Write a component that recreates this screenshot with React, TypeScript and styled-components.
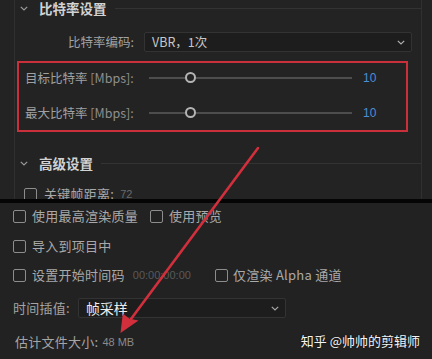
import React from 'react';
import styled, { createGlobalStyle } from 'styled-components';

const GlobalStyle = createGlobalStyle`
  html, body {
    margin: 0;
    padding: 0;
    background: #232323;
  }
  body {
    font-family: "Noto Sans CJK SC", "Noto Sans", sans-serif;
    -webkit-font-smoothing: antialiased;
  }
`;

const Page = styled.div`
  position: relative;
  width: 432px;
  height: 359px;
  overflow: hidden;
  display: flex;
  flex-direction: column;
`;

/* ---------- top screenshot ---------- */

const TopPanel = styled.div`
  height: 199px;
  background: #232323;
  overflow: hidden;
  flex-shrink: 0;
`;

const Frame = styled.div`
  margin-left: 14px;
  width: 406px;
  height: 100%;
  border-left: 1px solid #303030;
  border-right: 1px solid #303030;
  display: flex;
  flex-direction: column;
`;

const SectionHeader = styled.div<{ $top: number }>`
  display: flex;
  align-items: center;
  height: 16px;
  margin-top: ${p => p.$top}px;
  padding-left: 5px;
`;

const HeaderTitle = styled.span`
  margin-left: 11px;
  font-size: 13.5px;
  font-weight: 700;
  line-height: 16px;
  color: #d2d2d2;
  white-space: nowrap;
`;

const HeaderRule = styled.div`
  flex: 1;
  height: 1px;
  margin-left: 8px;
  margin-top: 1px;
  background: #333;
`;

const FieldRow = styled.div`
  display: flex;
  align-items: center;
  margin-top: 16px;
`;

const FieldLabel = styled.span<{ $width: number }>`
  width: ${p => p.$width}px;
  text-align: right;
  font-size: 12.5px;
  line-height: 20px;
  color: #a2a2a2;
  white-space: nowrap;
`;

const Select = styled.div<{ $width: number; $left: number }>`
  box-sizing: border-box;
  width: ${p => p.$width}px;
  height: 20px;
  margin-left: ${p => p.$left}px;
  display: flex;
  align-items: center;
  justify-content: space-between;
  padding: 0 6px 0 7px;
  background: #1d1d1d;
  border: 1px solid #333;
  border-radius: 2px;
`;

const SelectText = styled.span<{ $bright?: boolean }>`
  font-size: ${p => (p.$bright ? 14 : 12.5)}px;
  line-height: 18px;
  color: ${p => (p.$bright ? '#ececec' : '#c6c6c6')};
  white-space: nowrap;
`;

const Highlight = styled.div`
  margin: 9px 13px 0 2px;
  border: 2px solid #c9303c;
  padding-bottom: 2px;
  display: flex;
  flex-direction: column;
  gap: 5px;
`;

const SliderRow = styled.div`
  display: flex;
  align-items: center;
  height: 30px;
  padding-left: 6px;
`;

const SliderLabel = styled.span`
  width: 124px;
  font-size: 12.5px;
  line-height: 20px;
  color: #a0a0a0;
  white-space: nowrap;
`;

const Unit = styled.span`
  color: #8e8e8e;
`;

const Track = styled.div`
  position: relative;
  width: 203px;
  height: 2px;
  background: #4d4d4d;
`;

const Thumb = styled.div`
  position: absolute;
  top: -5px;
  box-sizing: border-box;
  width: 11px;
  height: 11px;
  border-radius: 50%;
  border: 2px solid #b4b4b4;
  background: #232323;
`;

const Value = styled.span`
  margin-left: 11px;
  font-family: "Liberation Sans", Arial, sans-serif;
  font-size: 12px;
  line-height: 20px;
  color: #4a8fd6;
`;

const Separator = styled.div`
  height: 1px;
  margin-top: 16px;
  background: #333;
`;

const CheckRow = styled.div<{ $top: number; $left?: number }>`
  display: flex;
  align-items: center;
  height: 26px;
  margin-top: ${p => p.$top}px;
  padding-left: ${p => p.$left ?? 0}px;
`;

const Box = styled.div`
  box-sizing: border-box;
  width: 13px;
  height: 13px;
  border: 1.5px solid #8d8d8d;
  border-radius: 2px;
  flex-shrink: 0;
`;

const CheckText = styled.span<{ $gap?: number }>`
  margin-left: ${p => p.$gap ?? 6}px;
  font-size: 13px;
  letter-spacing: 0.25px;
  line-height: 20px;
  color: #a9a9a9;
  white-space: nowrap;
`;

const DimText = styled.span<{ $left: number; $color?: string }>`
  margin-left: ${p => p.$left}px;
  font-family: "Liberation Sans", Arial, sans-serif;
  font-size: 11px;
  line-height: 20px;
  color: ${p => p.$color ?? '#595959'};
  white-space: nowrap;
`;

/* ---------- black seam between the two screenshots ---------- */

const Seam = styled.div`
  height: 4px;
  background: #050505;
  flex-shrink: 0;
`;

/* ---------- bottom screenshot ---------- */

const BottomPanel = styled.div`
  flex: 1;
  background: #222;
  padding-left: 13px;
  display: flex;
  flex-direction: column;
`;

const Group = styled.div<{ $width?: number }>`
  display: flex;
  align-items: center;
  width: ${p => (p.$width ? `${p.$width}px` : 'auto')};
  flex-shrink: 0;
`;

const PlainLabel = styled.span`
  font-size: 13px;
  letter-spacing: 0.25px;
  line-height: 20px;
  color: #a4a4a4;
  white-space: nowrap;
`;

const FooterRow = styled.div`
  display: flex;
  align-items: center;
  justify-content: space-between;
  height: 22px;
  margin-top: 13px;
  padding-left: 2px;
  padding-right: 12px;
`;

const Watermark = styled.span`
  font-size: 13px;
  line-height: 20px;
  color: #f4f4f4;
  text-shadow: 0 0 2px rgba(0, 0, 0, 0.6);
  white-space: nowrap;
  margin-top: -3px;
`;

const ArrowLayer = styled.svg`
  position: absolute;
  left: 0;
  top: 0;
  pointer-events: none;
`;

const Chevron = ({ color = '#9a9a9a', size = 8 }: { color?: string; size?: number }) => (
  <svg width={size} height={size / 2 + 1} viewBox="0 0 8 5" fill="none">
    <path d="M0.8 0.8 L4 4 L7.2 0.8" stroke={color} strokeWidth="1.2" />
  </svg>
);

const Slider = ({ label, pos }: { label: string; pos: number }) => (
  <SliderRow>
    <SliderLabel>
      {label} <Unit>[Mbps]:</Unit>
    </SliderLabel>
    <Track>
      <Thumb style={{ left: pos - 5 }} />
    </Track>
    <Value>10</Value>
  </SliderRow>
);

const App: React.FC = () => {
  return (
    <>
      <GlobalStyle />
      <Page>
        <TopPanel>
          <Frame>
            <SectionHeader $top={0}>
              <Chevron />
              <HeaderTitle>比特率设置</HeaderTitle>
              <HeaderRule />
            </SectionHeader>

            <FieldRow>
              <FieldLabel $width={119}>比特率编码:</FieldLabel>
              <Select $width={268} $left={10}>
                <SelectText>VBR，1次</SelectText>
                <Chevron color="#b0b0b0" />
              </Select>
            </FieldRow>

            <Highlight>
              <Slider label="目标比特率" pos={41} />
              <Slider label="最大比特率" pos={41} />
            </Highlight>

            <Separator />

            <SectionHeader $top={7}>
              <Chevron />
              <HeaderTitle>高级设置</HeaderTitle>
              <HeaderRule />
            </SectionHeader>

            <CheckRow $top={13} $left={9}>
              <Box />
              <CheckText $gap={7}>关键帧距离:</CheckText>
              <DimText $left={6} $color="#6a6a6a">72</DimText>
            </CheckRow>
          </Frame>
        </TopPanel>

        <Seam />

        <BottomPanel>
          <CheckRow $top={0}>
            <Box />
            <CheckText>使用最高渲染质量</CheckText>
            <Box style={{ marginLeft: 12 }} />
            <CheckText>使用预览</CheckText>
          </CheckRow>

          <CheckRow $top={4}>
            <Box />
            <CheckText>导入到项目中</CheckText>
          </CheckRow>

          <CheckRow $top={3}>
            <Group $width={202}>
              <Box />
              <CheckText>设置开始时间码</CheckText>
              <DimText $left={8}>00:00:00:00</DimText>
            </Group>
            <Box />
            <CheckText $gap={5}>仅渲染 Alpha 通道</CheckText>
          </CheckRow>

          <FieldRow style={{ marginTop: 10 }}>
            <PlainLabel>时间插值:</PlainLabel>
            <Select $width={208} $left={8}>
              <SelectText $bright>帧采样</SelectText>
              <Chevron color="#a8a8a8" />
            </Select>
          </FieldRow>

          <FooterRow>
            <Group>
              <PlainLabel>估计文件大小:</PlainLabel>
              <DimText $left={4} $color="#8a8a8a">48 MB</DimText>
            </Group>
            <Watermark>知乎 @帅帅的剪辑师</Watermark>
          </FooterRow>
        </BottomPanel>

        <ArrowLayer width="432" height="359" viewBox="0 0 432 359">
          <line x1="258" y1="148" x2="131" y2="319" stroke="#d22f3c" strokeWidth="2.6" strokeLinecap="round" />
          <path d="M120.5 333 L122.8 313.5 L129.5 318.8 L138.5 320.5 Z" fill="#d22f3c" />
        </ArrowLayer>
      </Page>
    </>
  );
};

export default App;
